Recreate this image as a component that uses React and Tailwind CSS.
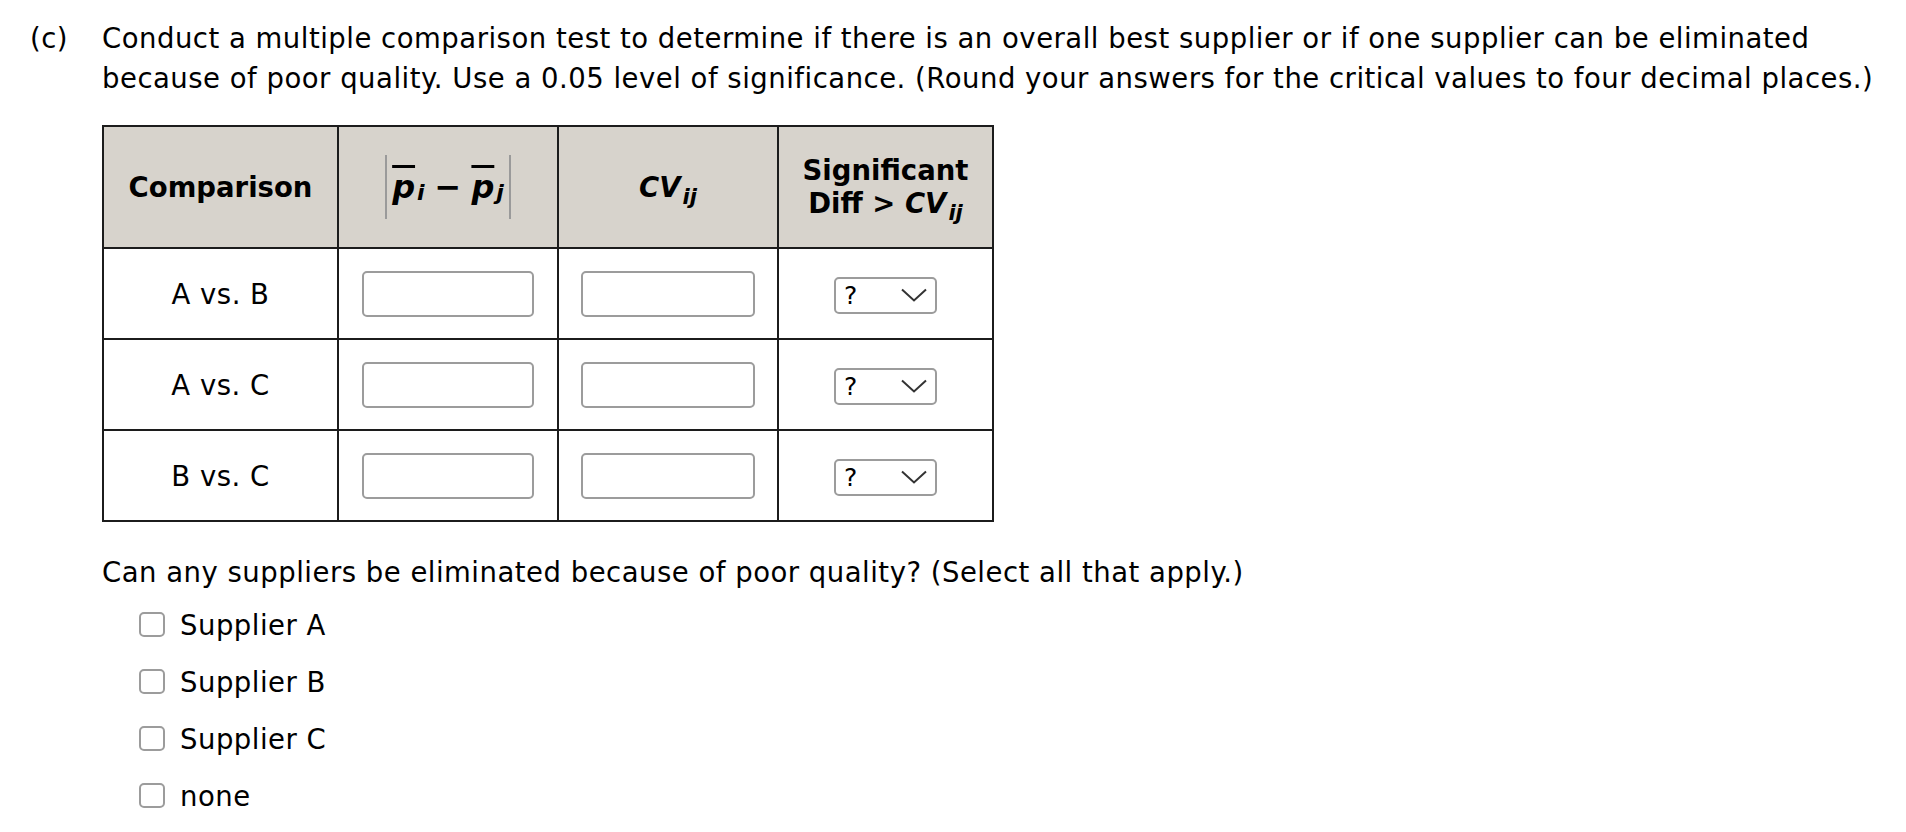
import React from 'react';

const rows = ['A vs. B', 'A vs. C', 'B vs. C'];
const suppliers = ['Supplier A', 'Supplier B', 'Supplier C', 'none'];

const Chevron = () => (
  <svg width="26" height="14" viewBox="0 0 26 14" className="block">
    <polyline points="1,1.5 13,12.5 25,1.5" fill="none" stroke="#333" strokeWidth="2" />
  </svg>
);

const App = () => {
  return (
    <div className="min-h-screen bg-white text-black pt-[18px] pl-[30px] font-['DejaVu_Sans',Verdana,sans-serif] text-[27.5px] leading-[40px] tracking-[0.5px]">
      <div className="flex">
        <span className="w-[72px] shrink-0">(c)</span>
        <div>
          <p className="whitespace-nowrap">
            Conduct a multiple comparison test to determine if there is an overall best supplier or if one supplier can be eliminated
            <br />
            because of poor quality. Use a 0.05 level of significance. (Round your answers for the critical values to four decimal places.)
          </p>

          <table className="mt-[27px] w-[890px] table-fixed border-collapse border-2 border-[#1c1c1c] tracking-normal">
            <colgroup>
              <col className="w-[235px]" />
              <col className="w-[220px]" />
              <col className="w-[220px]" />
              <col className="w-[215px]" />
            </colgroup>
            <thead>
              <tr className="h-[122px] bg-[#d7d3cc] font-bold">
                <th className="border-2 border-[#1c1c1c] text-center align-middle">Comparison</th>
                <th className="border-2 border-[#1c1c1c] text-center align-middle">
                  <span className="inline-flex items-center h-[64px] px-[5px] border-l-2 border-r-2 border-[#9a9a9a] italic text-[32px] leading-none">
                    <span className="overline">p</span>
                    <sub className="text-[22px] ml-[2px] relative top-[6px]">i</sub>
                    <span className="mx-[10px] not-italic">−</span>
                    <span className="overline">p</span>
                    <sub className="text-[22px] ml-[2px] relative top-[6px]">j</sub>
                  </span>
                </th>
                <th className="border-2 border-[#1c1c1c] text-center align-middle italic">
                  CV<sub className="text-[21px] ml-[2px] relative top-[7px]">ij</sub>
                </th>
                <th className="border-2 border-[#1c1c1c] text-center align-middle leading-[33px]">
                  Significant
                  <br />
                  Diff &gt; <span className="italic">CV<sub className="text-[21px] ml-[2px] relative top-[7px]">ij</sub></span>
                </th>
              </tr>
            </thead>
            <tbody>
              {rows.map((r) => (
                <tr key={r} className="h-[91px]">
                  <td className="border-2 border-[#1c1c1c] text-center align-middle tracking-[0.5px]">{r}</td>
                  <td className="border-2 border-[#1c1c1c] text-center align-middle">
                    <input type="text" className="w-[172px] h-[46px] border-2 border-[#9c9c9c] rounded-[5px] bg-white align-middle" />
                  </td>
                  <td className="border-2 border-[#1c1c1c] text-center align-middle">
                    <input type="text" className="w-[174px] h-[46px] border-2 border-[#9c9c9c] rounded-[5px] bg-white align-middle" />
                  </td>
                  <td className="border-2 border-[#1c1c1c] text-center align-middle">
                    <div className="inline-flex items-center justify-between w-[103px] h-[37px] border-2 border-[#9c9c9c] rounded-[5px] pl-[8px] pr-[8px] text-[25px] leading-none align-middle">
                      <span>?</span>
                      <Chevron />
                    </div>
                  </td>
                </tr>
              ))}
            </tbody>
          </table>

          <p className="mt-[30px] whitespace-nowrap">Can any suppliers be eliminated because of poor quality? (Select all that apply.)</p>

          <div className="mt-[4px] pl-[37px]">
            {suppliers.map((s) => (
              <label key={s} className="flex items-center h-[57px] gap-[15px]">
                <span className="w-[26px] h-[25px] border-2 border-[#9c9c9c] rounded-[5px] bg-white" />
                <span>{s}</span>
              </label>
            ))}
          </div>
        </div>
      </div>
    </div>
  );
};

export default App;
